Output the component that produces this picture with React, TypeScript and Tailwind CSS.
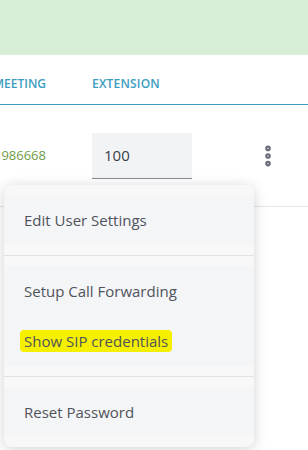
import { MoreVertical } from "lucide-react";

const FONT = { fontFamily: '"Open Sans", "Liberation Sans", sans-serif' };

export default function App() {
    return (
        <div className="relative w-[308px] h-[450px] overflow-hidden bg-white" style={FONT}>
            {/* Top banner */}
            <div className="h-[55px] bg-[#d9eed6]" />

            {/* Table header */}
            <div className="flex items-end h-[50px] pb-[11px] border-b border-[#3d9bbd] text-[12px] font-semibold text-[#3c9dc0]">
                <div className="w-[46px] overflow-hidden flex justify-end whitespace-nowrap">MEETING</div>
                <div className="ml-[46px] tracking-[0.2px]">EXTENSION</div>
            </div>

            {/* Table row */}
            <div className="flex items-center h-[102px] border-b border-[#e6e7ea]">
                <div className="w-[46px] flex justify-end whitespace-nowrap text-[13px] text-[#6f9a48]">986668</div>
                <div className="ml-[46px] w-[100px] h-[46px] bg-[#f2f3f5] border-b border-[#8a8d93] flex items-center px-3 text-[15px] text-[#3a3f4a]">
                    100
                </div>
                <div className="ml-auto mr-[27px] flex items-center">
                    <MoreVertical className="w-[26px] h-[26px] text-[#6a6e78]" strokeWidth={3.2} />
                </div>
            </div>

            {/* Dropdown menu */}
            <div className="absolute left-[4px] top-[185px] w-[250px] rounded-lg bg-[#f8f8f9] shadow-[0_2px_14px_rgba(0,0,0,0.18)] py-[10px] text-[15px] text-[#50535b]">
                <div className="bg-[#f4f5f7] h-[50px] flex items-center px-5">Edit User Settings</div>
                <div className="h-[10px]" />
                <div className="border-t border-[#e1e2e5]" />
                <div className="h-[10px]" />
                <div className="bg-[#f4f5f7]">
                    <div className="h-[50px] flex items-center px-5">Setup Call Forwarding</div>
                    <div className="h-[50px] flex items-center px-4">
                        <span className="bg-[#f5f000] px-1 rounded-sm">Show SIP credentials</span>
                    </div>
                </div>
                <div className="h-[10px]" />
                <div className="border-t border-[#e1e2e5]" />
                <div className="h-[10px]" />
                <div className="bg-[#f4f5f7] h-[50px] flex items-center px-5">Reset Password</div>
            </div>
        </div>
    );
}
